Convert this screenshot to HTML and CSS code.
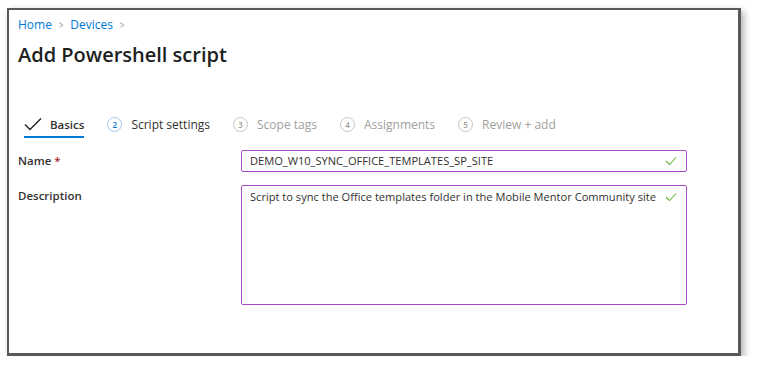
FILE: index.html
```html
<!DOCTYPE html>
<html lang="en">
<head>
    <meta charset="UTF-8">
    <title>Add Powershell script</title>
    <link rel="stylesheet" href="styles.css">
</head>
<body>
    <div class="frame">
        <nav class="crumbs">
            <a href="#">Home</a>
            <span class="sep">&gt;</span>
            <a href="#">Devices</a>
            <span class="sep">&gt;</span>
        </nav>
        <h1>Add Powershell script</h1>

        <div class="steps">
            <div class="step done">
                <svg class="tick" width="18" height="14" viewBox="0 0 18 14"><path d="M1 7.5 L6 12.5 L17 1.5" fill="none" stroke="#222" stroke-width="1.4"/></svg>
                <span>Basics</span>
            </div>
            <div class="step current"><span class="num">2</span><span>Script settings</span></div>
            <div class="step"><span class="num">3</span><span>Scope tags</span></div>
            <div class="step"><span class="num">4</span><span>Assignments</span></div>
            <div class="step"><span class="num">5</span><span>Review + add</span></div>
        </div>

        <div class="row">
            <label>Name <span class="req">*</span></label>
            <div class="field">
                <span>DEMO_W10_SYNC_OFFICE_TEMPLATES_SP_SITE</span>
                <svg class="ok" width="12" height="10" viewBox="0 0 12 10"><path d="M1 5 L4.5 8.5 L11 1.5" fill="none" stroke="#6bb33b" stroke-width="1.1"/></svg>
            </div>
        </div>
        <div class="row">
            <label>Description</label>
            <div class="field area">
                <span>Script to sync the Office templates folder in the Mobile Mentor Community site</span>
                <svg class="ok" width="12" height="10" viewBox="0 0 12 10"><path d="M1 5 L4.5 8.5 L11 1.5" fill="none" stroke="#6bb33b" stroke-width="1.1"/></svg>
            </div>
        </div>
    </div>
</body>
</html>
```

FILE: styles.css
```css
body {
    margin: 0;
    background-color: #fff;
    font-family: "Open Sans", "Noto Sans", sans-serif;
    color: #323130;
}
.frame {
    margin: 8px 0 0 7px;
    width: 734px;
    height: 348px;
    border: 2px solid #595959;
    border-right-width: 3px;
    border-bottom-width: 3px;
    box-shadow: 3px 3px 7px rgba(0, 0, 0, 0.3);
    padding: 6px 0 0 9px;
    box-sizing: border-box;
}
.crumbs {
    display: flex;
    align-items: center;
    gap: 6px;
    font-size: 12px;
    height: 17px;
}
.crumbs a {
    color: #0078d4;
    text-decoration: none;
}
.crumbs .sep {
    color: #8a8886;
    font-size: 11px;
    transform: scaleX(0.7);
}
h1 {
    margin: 9px 0 0;
    font-size: 20px;
    font-weight: 600;
    color: #201f1e;
    line-height: 26px;
}
.steps {
    display: flex;
    margin: 40px 0 0 6px;
    gap: 23px;
}
.step {
    display: flex;
    align-items: center;
    gap: 9px;
    height: 30px;
    box-sizing: border-box;
    padding-top: 4px;
    border-bottom: 2px solid transparent;
    font-size: 12px;
    color: #a19f9d;
}
.step.done {
    color: #323130;
    font-weight: 600;
    font-size: 11.5px;
    border-bottom-color: #0078d4;
    gap: 8px;
}
.step.current {
    color: #323130;
}
.num {
    width: 13px;
    height: 13px;
    border: 1px solid #c8c6c4;
    border-radius: 50%;
    font-size: 8px;
    font-weight: 600;
    display: flex;
    align-items: center;
    justify-content: center;
}
.step.current .num {
    border-color: #9ec6ec;
    color: #0078d4;
}
.row {
    display: flex;
    margin-top: 12px;
}
.row + .row {
    margin-top: 13px;
}
label {
    width: 223px;
    font-size: 11.5px;
    font-weight: 600;
    padding-top: 3px;
}
.req {
    color: #a4262c;
}
.field {
    width: 446px;
    height: 22px;
    box-sizing: border-box;
    border: 1px solid #a94bc7;
    border-radius: 2px;
    display: flex;
    justify-content: space-between;
    padding: 0 9px 0 8px;
    font-size: 11.1px;
    line-height: 20px;
}
.field.area {
    height: 120px;
    padding-top: 1px;
}
.ok {
    margin-top: 5px;
}
```
